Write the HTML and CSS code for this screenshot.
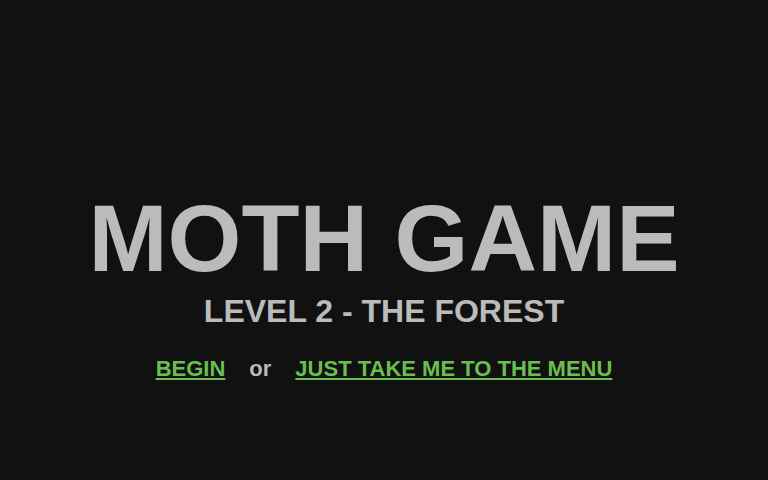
FILE: index.html
```html
<!DOCTYPE html>
<html lang="en">
<head>
    <meta charset="UTF-8">
    <meta name="viewport" content="width=device-width, initial-scale=1.0">
    <title>Moth Game</title>
    <link rel="stylesheet" href="styles.css">
</head>
<body>
    <main class="splash">
        <h1 class="title">MOTH GAME</h1>
        <h2 class="level">LEVEL 2 - THE FOREST</h2>
        <nav class="choices">
            <a href="#begin">BEGIN</a>
            <span>or</span>
            <a href="#menu">JUST TAKE ME TO THE MENU</a>
        </nav>
    </main>
</body>
</html>
```

FILE: styles.css
```css
body {
    margin: 0;
    min-height: 100vh;
    display: flex;
    flex-direction: column;
    background: #111;
    color: #bbb;
    font-family: "Liberation Sans", Arial, sans-serif;
    font-weight: bold;
    text-align: center;
}
.splash {
    flex: 1;
    display: flex;
    flex-direction: column;
    justify-content: flex-end;
    padding-bottom: 98px;
}
.title {
    margin: 0;
    font-size: 95px;
    line-height: 108px;
}
.level {
    margin: 0 0 26px;
    font-size: 32px;
    line-height: 38px;
}
.choices {
    display: flex;
    justify-content: center;
    gap: 24px;
    font-size: 22px;
    line-height: 26px;
}
.choices a {
    color: #6abe4f;
}
```
